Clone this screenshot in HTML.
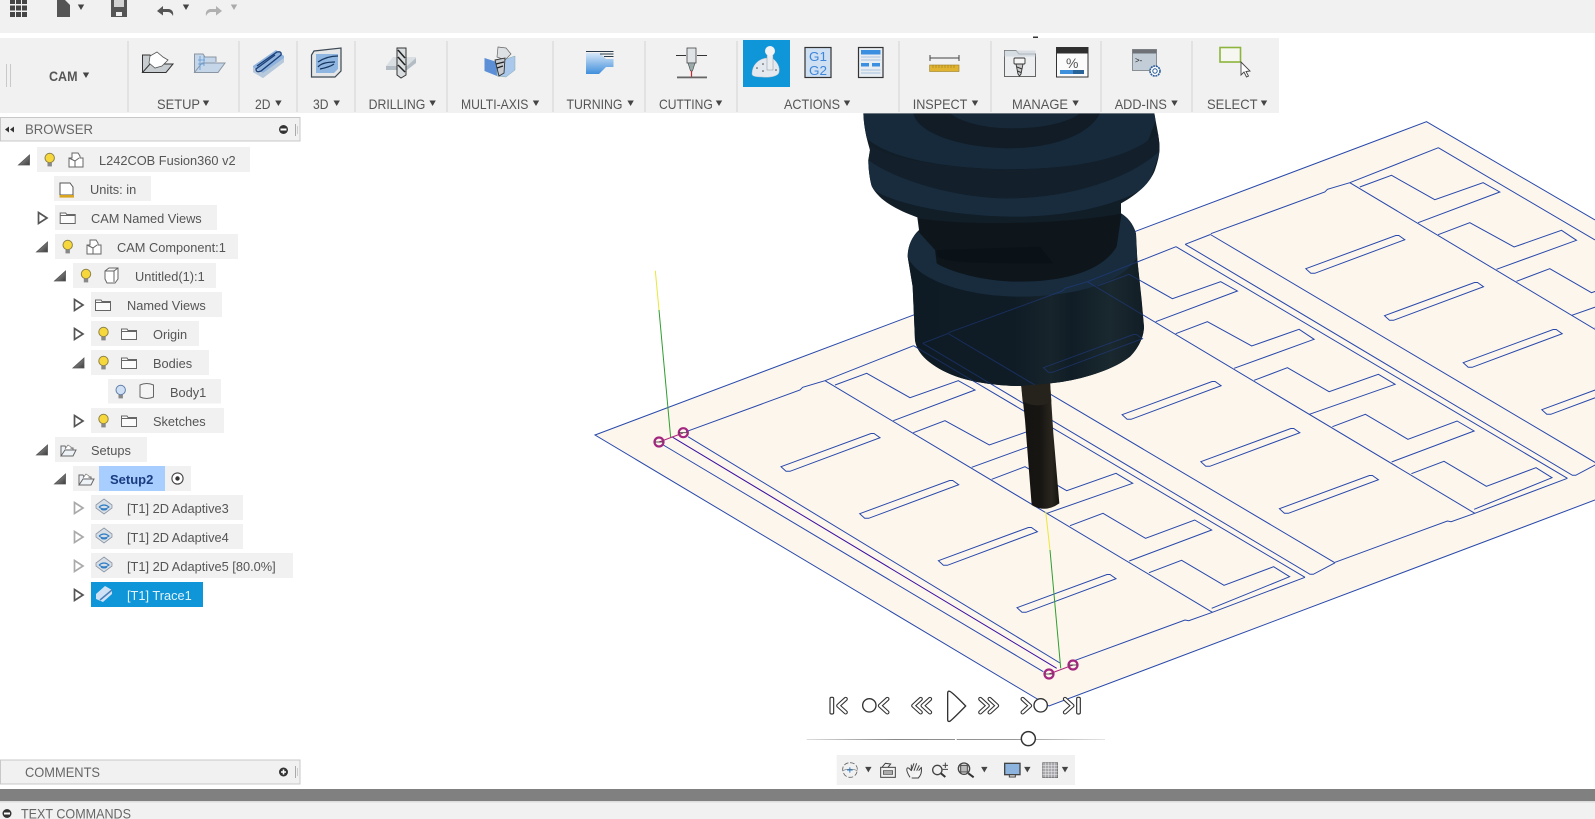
<!DOCTYPE html>
<html><head><meta charset="utf-8"><title>CAM</title>
<style>
html,body{margin:0;padding:0;background:#fff;width:1595px;height:819px;overflow:hidden}
svg{display:block;position:absolute;left:0;top:0}
text{font-family:"Liberation Sans",Arial,sans-serif}
.l{font-size:14px;fill:#555}
.t{font-size:12.8px;fill:#555}
.ln{fill:none;stroke:#2748ab;stroke-width:1}
</style></head><body>
<svg width="1595" height="819" viewBox="0 0 1595 819" xmlns="http://www.w3.org/2000/svg">
<defs>
<linearGradient id="body" x1="0" x2="1" y1="0" y2="0"><stop offset="0" stop-color="#0f1b24"/><stop offset=".45" stop-color="#0f1c26"/><stop offset=".6" stop-color="#17242b"/><stop offset=".68" stop-color="#101d26"/><stop offset=".84" stop-color="#1a282f"/><stop offset="1" stop-color="#101c24"/></linearGradient>
<linearGradient id="shaft" x1="0" x2="1" y1="0" y2="0"><stop offset="0" stop-color="#151411"/><stop offset=".5" stop-color="#171512"/><stop offset=".8" stop-color="#2a261e"/><stop offset="1" stop-color="#16140f"/></linearGradient>
<linearGradient id="tg" x1="0" x2="1" y1="0" y2="1"><stop offset="0" stop-color="#aaa"/><stop offset="1" stop-color="#3c3c3c"/></linearGradient>
<linearGradient id="sl" x1="0" x2="1"><stop offset="0" stop-color="#ddd"/><stop offset=".3" stop-color="#888"/><stop offset=".7" stop-color="#999"/><stop offset="1" stop-color="#e5e5e5"/></linearGradient>
<linearGradient id="bl" x1="0" x2="0" y1="0" y2="1"><stop offset="0" stop-color="#d6e6f7"/><stop offset="1" stop-color="#3f8fdc"/></linearGradient>
<polygon id="dn" points="-3.2,-2.5 3.2,-2.5 0,3"/>
<g id="bulb"><circle cx="0" cy="-2" r="4.7" fill="#f6d73c" stroke="#8d8248" stroke-width="1"/><rect x="-2.2" y="2.8" width="4.4" height="3.6" fill="#888"/></g>
<g id="bulbb"><circle cx="0" cy="-2" r="4.7" fill="#cfe0f5" stroke="#5f7ea8" stroke-width="1"/><rect x="-2.2" y="2.8" width="4.4" height="3.6" fill="#888"/></g>
<g id="fold"><path d="M-7.5,-5 H-2 L-1,-3.5 H7.5 V5.5 H-7.5 Z M-7.5,-2.5 H7.5" fill="#fbfbfb" stroke="#666" stroke-width="1"/></g>
<g id="comp"><path d="M-7,7 V-2 H-4 V-7 H2 L4,-4 V-2 H7 V7 Z M-1,7 V1 L3,-2 M-1,1 L-7,-2" fill="#fff" stroke="#666" stroke-width="1"/></g>
<polygon id="tf" points="-5.5,5 5.5,5 5.5,-5" fill="url(#tg)" stroke="#555" stroke-width=".8"/>
<polygon id="to" points="-4,-5.5 4.5,0 -4,5.5" fill="#fff" stroke="#555" stroke-width="1.7"/>
<polygon id="tl" points="-4,-5.5 4.5,0 -4,5.5" fill="#fff" stroke="#aaa" stroke-width="1.7"/>
<g id="ofold"><path d="M-7,6 V-4 H-3 L-2,-2 H5 V0 M-7,6 L-3,0 H8 L5,6 Z" fill="#eef3f8" stroke="#666" stroke-width="1"/><path d="M-3,-1 L0,-5 L3,-3 L3,-1" fill="#fff" stroke="#777" stroke-width=".7"/></g>
<g id="adp"><polygon points="0,-8 8,-2 8,1 0,7 -8,1 -8,-2" fill="#d8dee6" stroke="#8a95a3" stroke-width=".8"/><path d="M-5,0 Q0,-4 5,0 Q0,4 -5,0 M-3,2 Q0,4 3,2" fill="none" stroke="#2f7dc4" stroke-width="1.1"/></g>
<path id="slot" class="ln" d="M781,466.7 L871,433.5 L874,433.5 L880,437.7 L790,471.3 L786,471.3 Z"/>
<g id="core" class="ln">
<path d="M686,431.7 L800,390 L802.7,387.3 L825,380.7 L913.6,345.7"/>
<path d="M825,380.7 L1212.4,612.3"/>
<path d="M835,385 L866.7,373.3 L910,397.7 L958.3,380.7 L975,390 L893.3,420.7"/>
<path d="M913.3,432.7 L945,420.7 L989.3,445 L1036.7,428.3 L1051.7,438.3 L971.7,467.3"/>
<path d="M991.7,479.3 L1025,466.7 L1066.7,490.7 L1116,473.3 L1132.7,483.3 L1047,513.3"/>
<path d="M1070,525.7 L1103,513.3 L1145.5,538.3 L1194.7,520 L1211.7,530 L1129.2,561"/>
<path d="M1149,572.7 L1181.6,560.3 L1224,585.3 L1273.6,566.7 L1289.6,576.7 L1211.7,608.3"/>
<path d="M1072.6,661.3 L1185,620 L1188.7,620.7 L1212.4,612.3 L1305,577.3"/>
<use href="#slot"/><use href="#slot" transform="translate(78.7,47)"/><use href="#slot" transform="translate(157.4,94)"/><use href="#slot" transform="translate(236,141)"/>
</g>
<g id="mm" class="ln">
<path d="M913.6,345.7 L1305,577.3"/>
<path d="M922.8,343.3 L1310,574.3 L1313.3,574.3 L1335,562.8"/>
<path d="M948,333.5 L1335,562.8"/>
<path d="M922.8,343.3 L948,333.5"/>
</g>
<g id="lines">
<use href="#core"/><use href="#mm"/>
<use href="#core" transform="translate(262.4,-99)"/><use href="#mm" transform="translate(262.4,-99)"/>
<use href="#core" transform="translate(524.8,-198)"/>
<path class="ln" d="M1438.3,147.7 L1595,240"/>
<path class="ln" d="M688,436.7 L1060,663"/>
<path class="ln" d="M663.3,445 L1043.3,671.7"/>
<path fill="none" stroke="#3a0fa0" stroke-width="1" d="M671.7,436.7 L1056.7,668.3"/>
</g>
<path id="toolS" d="M70,40 C72,80 78,110 90,150 L85,180 C85,210 90,240 95,258 C115,300 170,330 232,352 L237,390 C215,410 203,440 203,470 L218,560 L225,720 C230,760 270,800 350,830 C400,848 480,858 540,858 L630,850 C720,842 820,810 870,770 C895,745 912,710 912,680 L905,600 L892,480 L888,400 C880,370 860,350 843,340 L843,310 C890,285 930,250 945,210 C955,180 960,160 958,130 C955,100 950,80 943,40 Z"/>
<clipPath id="tc"><use href="#toolS" transform="translate(840,100) scale(.33333)"/></clipPath>
<clipPath id="tb"><path d="M203,470 C230,540 380,590 540,590 C700,590 850,550 892,470 L912,680 L900,900 L200,900 Z"/></clipPath>
<clipPath id="ts"><use href="#toolS"/></clipPath>
</defs>

<!-- sheet -->
<polygon points="595,435 1426.5,121.7 1595,220 1595,500 1049,706" fill="#fdf6ed"/>
<path class="ln" d="M1595,220 L1426.5,121.7 L595,435 L1049,706 L1595,500"/>
<use href="#lines"/>

<!-- axes -->
<path d="M655.3,270.7 L659,310" stroke="#e8e83a" fill="none"/><path d="M659,310 L670.7,438" stroke="#2e9e2e" fill="none"/>
<path d="M1045.7,511.7 L1050,550" stroke="#e8e83a" fill="none"/><path d="M1050,550 L1060.7,668.3" stroke="#2e9e2e" fill="none"/>
<path d="M659,442 L683,433" stroke="#b0267f" fill="none"/><path d="M1049,674 L1073,665" stroke="#b0267f" fill="none"/>
<g fill="none" stroke="#a3267f" stroke-width="2.2"><circle cx="659" cy="442" r="4.5"/><circle cx="683.3" cy="432.7" r="4.5"/><circle cx="1049" cy="674" r="4.5"/><circle cx="1073" cy="665" r="4.5"/></g>
<g stroke="#333" stroke-width=".8"><path d="M655,442 H663"/><path d="M679,432.7 H687"/><path d="M1045,674 H1053"/><path d="M1069,665 H1077"/></g>

<!-- tool -->
<g transform="translate(840,100) scale(.33333)">
<path d="M543,850 L555,960 L575,1215 Q615,1240 658,1210 L640,1000 L630,845 Z" fill="url(#shaft)"/>
<path d="M543,850 L548,905 C580,920 610,920 634,905 L630,845 Z" fill="#26231d"/>
<use href="#toolS" fill="#111d27"/>
<g clip-path="url(#ts)">
<rect x="190" y="460" width="740" height="410" fill="url(#body)" clip-path="url(#tb)"/>
<path d="M235,355 L240,400 L285,450 L290,490 C320,510 420,545 540,545 C680,545 790,510 830,440 L845,340 C700,370 400,380 235,355 Z" fill="#0e161c"/>
<path d="M290,470 C330,490 420,490 540,490 L640,490 L600,440 L290,450 Z" fill="#0b1217"/>
<path d="M203,470 C230,540 380,590 540,590 C700,590 850,550 892,470 L888,400 L870,360 L845,340 L830,440 C790,510 680,545 540,545 C420,545 320,510 290,490 L285,450 L235,395 L203,430 Z" fill="#182c3e"/>
<path d="M80,190 L85,255 C130,310 350,350 520,350 C700,350 850,310 925,255 L965,140 C880,230 700,295 500,295 C320,292 150,230 80,175 Z" fill="#182c3e"/>
<path d="M60,40 L76,110 C130,170 300,205 500,208 C700,208 860,180 925,120 L955,40 Z" fill="#172a3b"/>
<path d="M220,40 C230,90 330,140 500,145 C650,145 750,100 780,40 Z" fill="#111c26"/>
<path d="M330,40 C370,70 440,85 520,85 C600,85 680,70 720,40 Z" fill="#172838"/>
<path d="M90,135 C130,170 300,205 500,208 C700,208 860,180 955,100 L962,150 C880,230 700,295 500,295 C320,292 150,230 85,180 Z" fill="#131f2a"/>
</g>
</g>
<g clip-path="url(#tc)" opacity=".42"><use href="#lines"/></g>

<!-- top bar -->
<rect x="0" y="0" width="1595" height="33" fill="#f1f1f1"/>
<rect x="0" y="38" width="1279" height="75" fill="#f1f1f1"/>
<rect x="1033" y="36.5" width="5" height="1.5" fill="#333"/>
<g fill="#454545"><rect x="10" y="0" width="5" height="4"/><rect x="16" y="0" width="5" height="4"/><rect x="22" y="0" width="5" height="4"/><rect x="10" y="5.5" width="5" height="5"/><rect x="16" y="5.5" width="5" height="5"/><rect x="22" y="5.5" width="5" height="5"/><rect x="10" y="12" width="5" height="5"/><rect x="16" y="12" width="5" height="5"/><rect x="22" y="12" width="5" height="5"/></g>
<path d="M57,0 H65 L70,5 V17 H57 Z" fill="#555"/>
<use href="#dn" x="81" y="7" fill="#444"/>
<path d="M111,0 H127 V17 H111 Z" fill="#555"/><rect x="114" y="0" width="10" height="7" fill="#f1f1f1" opacity=".8"/><rect x="116" y="12" width="6" height="4" fill="#f1f1f1"/>
<path d="M157,11 L163,6 V9 H169 Q174,10 173,16 Q171,12 168,12 H163 V15.5 Z" fill="#555"/>
<use href="#dn" x="186" y="7" fill="#444"/>
<path d="M222,11 L216,6 V9 H210 Q205,10 206,16 Q208,12 211,12 H216 V15.5 Z" fill="#b0b0b0"/>
<use href="#dn" x="234" y="7" fill="#aaa"/>

<!-- toolbar separators -->
<g fill="#e2e2e2"><rect x="127" y="41" width="2" height="71"/><rect x="238" y="41" width="2" height="71"/><rect x="296" y="41" width="2" height="71"/><rect x="354" y="41" width="2" height="71"/><rect x="446" y="41" width="2" height="71"/><rect x="552" y="41" width="2" height="71"/><rect x="644" y="41" width="2" height="71"/><rect x="736" y="41" width="2" height="71"/><rect x="898" y="41" width="2" height="71"/><rect x="990" y="41" width="2" height="71"/><rect x="1100" y="41" width="2" height="71"/><rect x="1191" y="41" width="2" height="71"/></g>
<g fill="#c9c9c9"><rect x="6" y="64" width="1" height="23"/><rect x="10" y="64" width="1" height="23"/></g>
<text x="49" y="81" font-size="14" font-weight="bold" fill="#555" textLength="28.5" lengthAdjust="spacingAndGlyphs">CAM</text>
<use href="#dn" x="86" y="75" fill="#444"/>

<!-- labels -->
<text class="l" x="157" y="109" textLength="43" lengthAdjust="spacingAndGlyphs">SETUP</text>
<text class="l" x="255" y="109" textLength="15.5" lengthAdjust="spacingAndGlyphs">2D</text>
<text class="l" x="313" y="109" textLength="15.5" lengthAdjust="spacingAndGlyphs">3D</text>
<text class="l" x="368.6" y="109" textLength="56.7" lengthAdjust="spacingAndGlyphs">DRILLING</text>
<text class="l" x="461" y="109" textLength="67.4" lengthAdjust="spacingAndGlyphs">MULTI-AXIS</text>
<text class="l" x="566.5" y="109" textLength="56" lengthAdjust="spacingAndGlyphs">TURNING</text>
<text class="l" x="659" y="109" textLength="53.8" lengthAdjust="spacingAndGlyphs">CUTTING</text>
<text class="l" x="784" y="109" textLength="56" lengthAdjust="spacingAndGlyphs">ACTIONS</text>
<text class="l" x="912.7" y="109" textLength="54.7" lengthAdjust="spacingAndGlyphs">INSPECT</text>
<text class="l" x="1012" y="109" textLength="56" lengthAdjust="spacingAndGlyphs">MANAGE</text>
<text class="l" x="1114.7" y="109" textLength="52.2" lengthAdjust="spacingAndGlyphs">ADD-INS</text>
<text class="l" x="1207" y="109" textLength="50.5" lengthAdjust="spacingAndGlyphs">SELECT</text>
<g fill="#444"><use href="#dn" x="206" y="103"/><use href="#dn" x="278.4" y="103"/><use href="#dn" x="336.7" y="103"/><use href="#dn" x="432.6" y="103"/><use href="#dn" x="536" y="103"/><use href="#dn" x="630.6" y="103"/><use href="#dn" x="719" y="103"/><use href="#dn" x="847" y="103"/><use href="#dn" x="975" y="103"/><use href="#dn" x="1075.6" y="103"/><use href="#dn" x="1174.5" y="103"/><use href="#dn" x="1264" y="103"/></g>

<!-- setup icons -->
<path d="M142.5,72.5 V55 H150 L152,58 H160 V62 M142.5,72.5 L150,64 H173 L166,72.5 Z" fill="#c8cdd2" stroke="#333" stroke-width="1"/>
<path d="M149,63 L150,56 L157,52 L163,57 L168,60 L162,66 L155,68 Z" fill="#fff" stroke="#555" stroke-width=".8"/>
<path d="M194.5,72.5 V54 H203 L205,57 H216 V62 M194.5,72.5 L202,63 H225 L218,72.5 Z" fill="#c4d6e8" stroke="#8a95a3" stroke-width="1"/>
<path d="M198,60 H205 M198,64 H204 M200,56 V70 M204,56 V66" stroke="#5e9bd8" stroke-width=".8" fill="none"/>
<!-- 2D -->
<path d="M253,66 L276,50 L284,56 L284,62 L263,78 L253,72 Z" fill="#8fb3dc"/>
<path d="M253,72 L263,78 L284,62 L284,58 L263,73 L253,67 Z" fill="#b8c9dc"/>
<path d="M257,66 L277,52 Q282,51 281,55 L261,71 Q256,73 256,69 L275,55" fill="none" stroke="#1b3f78" stroke-width="1.3"/>
<!-- 3D -->
<path d="M314,51 L341,48 V71 L335,77 H311.5 V55 Z" fill="#e4e6e8" stroke="#3d4954" stroke-width="1.2"/>
<path d="M316,54 H338 V69 L334,73 H316 Z" fill="#8fb6e0"/>
<path d="M318,62 Q327,56 338,56 M318,67 Q322,62 335,62 M320,69 Q330,67 334,64" stroke="#16365f" stroke-width="1.2" fill="none"/>
<!-- drilling -->
<path d="M386,66 L393,57 H416 V63 L407,70 H386 Z" fill="#d9dee2"/>
<path d="M386,66 H407 L416,58 V63 L407,70 H386 Z" fill="#b5bdc4"/>
<path d="M397,48 H406 V75 L401,78 L397,75 Z" fill="#d9dde0" stroke="#333" stroke-width="1"/>
<path d="M398,50 L405,58 M398,57 L405,65 M398,65 L405,72" stroke="#222" stroke-width="1.5"/>
<!-- multi-axis -->
<path d="M484.5,58 L497,62 V76 L484.5,71 Z" fill="#5c8fd6"/><path d="M497,62 L515,56 V70 L506,77 L497,76 Z" fill="#a9c8ec" stroke="#8aa" stroke-width=".5"/>
<path d="M498,47 L506,48 L511,54 L505,60 L497,57 Z" fill="#dde1e4" stroke="#666" stroke-width=".7"/>
<path d="M495,60 L505,58 L504,73 L499,76 Z" fill="#c8ccd0" stroke="#333" stroke-width=".9"/>
<path d="M496,64 L504,62 M497,68 L503,66" stroke="#222" stroke-width="1.2"/>
<!-- turning -->
<path d="M586,53 H600 L606,59 H613.5 V67 H606 L599,74 H586 Z" fill="url(#bl)"/>
<path d="M586,51.5 H613.5 M600,54 H613.5 M604,56.5 H613.5" stroke="#2b3a4a" stroke-width="1" fill="none"/>
<!-- cutting -->
<path d="M676,55.5 H686 M697,55.5 H707" stroke="#333" stroke-width="1"/>
<rect x="687" y="48" width="9" height="15" fill="#dfe3e6" stroke="#444" stroke-width=".8"/>
<path d="M688,63 H695 L692.5,71 H690.5 Z" fill="#9aa" stroke="#444" stroke-width=".6"/>
<path d="M691.5,71 V77" stroke="#c9252d" stroke-width="1.2"/>
<rect x="677" y="76.5" width="30" height="1.8" fill="#666"/>
<!-- actions -->
<rect x="743" y="40" width="47" height="47" fill="#0e96d9"/>
<path d="M752,74 C752,64 760,58 768,58 H772 C778,62 780,68 779,72 C779,76 770,78 762,77 C755,77 752,76 752,74 Z" fill="#e3e9ef" stroke="#aebccb" stroke-width=".5"/>
<rect x="767" y="55" width="6" height="15" fill="#e9edf0" stroke="#8895a0" stroke-width=".5"/>
<circle cx="770" cy="51" r="5" fill="#f0f2f4"/>
<g fill="#444"><circle cx="757" cy="68" r=".8"/><circle cx="763" cy="64" r=".8"/><circle cx="763" cy="71" r=".8"/><circle cx="776" cy="70" r=".8"/></g>
<rect x="805" y="47.5" width="26" height="30" fill="#cfe0f2" stroke="#333" stroke-width="1.2"/>
<text x="809" y="61" font-size="13" fill="#3f86d9" textLength="18" lengthAdjust="spacingAndGlyphs">G1</text>
<text x="809" y="75" font-size="13" fill="#3f86d9" textLength="18" lengthAdjust="spacingAndGlyphs">G2</text>
<rect x="858.5" y="47.5" width="24.5" height="30" fill="#e8edf2" stroke="#333" stroke-width="1.2"/>
<rect x="861" y="50" width="19.5" height="4.5" fill="#3b8fe0"/>
<path d="M861,57 H880.5 M861,60 H880.5 M861,70 H880.5 M861,73 H880.5" stroke="#a9c4de" stroke-width="1"/>
<rect x="861" y="63" width="8" height="3.5" fill="#3b8fe0"/><rect x="872" y="63" width="8" height="3.5" fill="#3b8fe0"/>
<!-- inspect -->
<path d="M930,58 H959 M930,55 V61 M959,55 V61" stroke="#444" stroke-width="1" fill="none"/>
<rect x="929.6" y="65" width="29.4" height="6.5" fill="#e0b431" stroke="#9c7d20" stroke-width=".6"/>
<path d="M933,65 V68 M936,65 V68 M939,65 V68 M942,65 V68 M945,65 V68 M948,65 V68 M951,65 V68 M954,65 V68" stroke="#9c7d20" stroke-width=".6"/>
<!-- manage -->
<path d="M1004.5,76.5 V50.5 H1016 L1019,54 H1035.5 V76.5 Z" fill="#eceef0" stroke="#666" stroke-width="1"/><rect x="1004.5" y="50.5" width="31" height="6" fill="#cdd5dd" opacity=".7"/>
<rect x="1014" y="58" width="11" height="6" rx="1" fill="#f5f5f5" stroke="#333" stroke-width=".9"/>
<path d="M1016,64 H1023 L1021,74 L1019.5,76 L1018,74 Z" fill="#ccc" stroke="#333" stroke-width=".9"/><path d="M1017,67 L1022,69 M1017.5,71 L1021,72.5" stroke="#333"/>
<rect x="1056.5" y="47.5" width="31.5" height="29.5" fill="#fbfbfb" stroke="#333" stroke-width="1"/>
<rect x="1056.5" y="47.5" width="31.5" height="6" fill="#2f2f2f"/>
<rect x="1060" y="70" width="13" height="4" fill="#3e8fdc"/><rect x="1073" y="70" width="11" height="4" fill="#2a6398"/>
<text x="1066" y="68" font-size="14" fill="#555">%</text>
<!-- addins -->
<rect x="1132.5" y="49.5" width="24" height="21" fill="#c3cdd8" stroke="#8a8f95" stroke-width="1"/><rect x="1132.5" y="49.5" width="24" height="4" fill="#6e7276"/>
<text x="1135" y="63" font-size="8" fill="#222">&gt;-</text>
<circle cx="1155" cy="71" r="5" fill="#fff" stroke="#2a5c9a" stroke-width="1.6" stroke-dasharray="2 .7"/><circle cx="1155" cy="71" r="2.2" fill="#fff" stroke="#2a5c9a"/>
<!-- select -->
<rect x="1220" y="47.5" width="20.5" height="14.5" fill="#f7f7f2" stroke="#8db43c" stroke-width="1.6"/>
<path d="M1241,62 V75 L1244,72 L1246.5,77 L1248.5,76 L1246,71.5 L1250,71 Z" fill="#fff" stroke="#444" stroke-width=".9"/>

<!-- browser -->
<rect x="0.5" y="117.5" width="299.5" height="23.5" fill="#f1f1f1" stroke="#c8c8c8"/>
<g fill="#333"><polygon points="5,129.5 9,126.5 9,132.5"/><polygon points="10,129.5 14,126.5 14,132.5"/></g>
<text x="25" y="134" font-size="14" fill="#666" textLength="68" lengthAdjust="spacingAndGlyphs">BROWSER</text>
<circle cx="283.5" cy="129.5" r="4.5" fill="#333"/><rect x="280.5" y="128.5" width="6" height="2" fill="#fff"/>
<rect x="295" y="124" width="1" height="12" fill="#aaa"/><rect x="297" y="126" width="1" height="8" fill="#ccc"/>

<g fill="#f1f1f1">
<rect x="37" y="147" width="213" height="25"/><rect x="54" y="176" width="97" height="25"/><rect x="55" y="205" width="162" height="25"/><rect x="55" y="234" width="183" height="25"/><rect x="73" y="263" width="143" height="25"/><rect x="91" y="292" width="131" height="25"/><rect x="91" y="321" width="108" height="25"/><rect x="91" y="350" width="118" height="25"/><rect x="108" y="379" width="113" height="24.5"/><rect x="91" y="408" width="133" height="25"/><rect x="55" y="437" width="92" height="25"/><rect x="73" y="466" width="118" height="25"/><rect x="91" y="495" width="152" height="25"/><rect x="91" y="524" width="152" height="25"/><rect x="91" y="553" width="202" height="25"/>
</g>
<rect x="99" y="466" width="66" height="25" fill="#a8ceff"/>
<rect x="91" y="582" width="112" height="25" fill="#0e96d9"/>

<use href="#tf" x="24" y="160"/><use href="#bulb" x="49.7" y="160"/><use href="#comp" x="76" y="160"/>
<text class="t" x="99" y="165">L242COB Fusion360 v2</text>
<path d="M60,184 V195 H73 V187 L70,183 H60 Z" fill="#fff" stroke="#555"/><rect x="59.5" y="195" width="14.5" height="2.6" fill="#d9a520"/>
<text class="t" x="90" y="194">Units: in</text>
<use href="#to" x="42.5" y="218"/><use href="#fold" x="67.7" y="218"/>
<text class="t" x="91" y="223">CAM Named Views</text>
<use href="#tf" x="42" y="247"/><use href="#bulb" x="67.7" y="247"/><use href="#comp" x="94" y="247"/>
<text class="t" x="117" y="252">CAM Component:1</text>
<use href="#tf" x="60" y="276"/><use href="#bulb" x="86" y="276"/>
<path d="M105,279 V271 L109,268 H118 V279 L115,283 H107 Z M105,271 H114 L118,268 M114,271 V282" fill="#fff" stroke="#666"/>
<text class="t" x="135" y="281">Untitled(1):1</text>
<use href="#to" x="78.5" y="305"/><use href="#fold" x="103" y="305"/>
<text class="t" x="127" y="310">Named Views</text>
<use href="#to" x="78.5" y="334"/><use href="#bulb" x="103.5" y="334"/><use href="#fold" x="129" y="334"/>
<text class="t" x="153" y="339">Origin</text>
<use href="#tf" x="78.5" y="363"/><use href="#bulb" x="103.5" y="363"/><use href="#fold" x="129" y="363"/>
<text class="t" x="153" y="368">Bodies</text>
<use href="#bulbb" x="120.7" y="392"/>
<path d="M140,385 Q146.7,382 153.5,385 V397 Q146.7,400 140,397 Z" fill="#f4f4f4" stroke="#666"/>
<text class="t" x="170" y="397">Body1</text>
<use href="#to" x="78.5" y="421"/><use href="#bulb" x="103.5" y="421"/><use href="#fold" x="129" y="421"/>
<text class="t" x="153" y="426">Sketches</text>
<use href="#tf" x="42" y="450"/><use href="#ofold" x="68" y="450"/>
<text class="t" x="91" y="455">Setups</text>
<use href="#tf" x="60" y="479"/><use href="#ofold" x="86" y="479"/>
<text x="110" y="484" font-size="13" font-weight="bold" fill="#1a3b80">Setup2</text>
<circle cx="177.5" cy="478.5" r="5.6" fill="#fff" stroke="#444" stroke-width="1.1"/><circle cx="177.5" cy="478.5" r="2.2" fill="#333"/>
<use href="#tl" x="78.5" y="508"/><use href="#adp" x="104" y="507"/>
<text class="t" x="127" y="513">[T1] 2D Adaptive3</text>
<use href="#tl" x="78.5" y="537"/><use href="#adp" x="104" y="536"/>
<text class="t" x="127" y="542">[T1] 2D Adaptive4</text>
<use href="#tl" x="78.5" y="566"/><use href="#adp" x="104" y="565"/>
<text class="t" x="127" y="571">[T1] 2D Adaptive5 [80.0%]</text>
<use href="#to" x="78.5" y="595"/>
<path d="M96,594 L105,586 L112,590 V594 L103,602 L96,599 Z" fill="#cfe2f5"/><path d="M100,600 L112,590" stroke="#4a7fb8" stroke-width="1.5"/>
<text x="127" y="600" font-size="12.8" fill="#e4f3fb">[T1] Trace1</text>

<!-- comments -->
<rect x="0.5" y="760" width="299.5" height="24" fill="#f1f1f1" stroke="#c8c8c8"/>
<text x="25" y="777" font-size="14" fill="#666" textLength="75" lengthAdjust="spacingAndGlyphs">COMMENTS</text>
<circle cx="283.5" cy="772" r="4.5" fill="#333"/><path d="M281,772 H286 M283.5,769.5 V774.5" stroke="#fff" stroke-width="1.6"/>
<rect x="295" y="766" width="1" height="12" fill="#aaa"/><rect x="297" y="768" width="1" height="8" fill="#ccc"/>

<!-- bottom -->
<rect x="0" y="789" width="1595" height="12" fill="#808080"/>
<rect x="0" y="801" width="1595" height="1.5" fill="#ddd"/>
<rect x="0" y="802.5" width="1595" height="17" fill="#f1f1f1"/>
<circle cx="7" cy="813.5" r="4.5" fill="#333"/><rect x="4" y="812.5" width="6" height="2" fill="#fff"/>
<text x="21" y="818.5" font-size="14" fill="#666" textLength="110" lengthAdjust="spacingAndGlyphs">TEXT COMMANDS</text>

<!-- playback -->
<g transform="translate(800,680) scale(.33333)">
<rect x="90" y="52" width="11" height="50" rx="4" fill="#fff" stroke="#333" stroke-width="3.5"/>
<path d="M137,57 L115,77 L137,97" fill="none" stroke="#333" stroke-width="13" stroke-linecap="round" stroke-linejoin="round"/><path d="M137,57 L115,77 L137,97" fill="none" stroke="#fff" stroke-width="6.5" stroke-linecap="round" stroke-linejoin="round"/>
<circle cx="208" cy="76" r="20" fill="#fff" stroke="#333" stroke-width="4"/>
<path d="M262,57 L240,77 L262,97" fill="none" stroke="#333" stroke-width="13" stroke-linecap="round" stroke-linejoin="round"/><path d="M262,57 L240,77 L262,97" fill="none" stroke="#fff" stroke-width="6.5" stroke-linecap="round" stroke-linejoin="round"/>
<path d="M362,57 L340,77 L362,97 M390,57 L368,77 L390,97" fill="none" stroke="#333" stroke-width="13" stroke-linecap="round" stroke-linejoin="round"/><path d="M362,57 L340,77 L362,97 M390,57 L368,77 L390,97" fill="none" stroke="#fff" stroke-width="6.5" stroke-linecap="round" stroke-linejoin="round"/>
<path d="M449,34 Q443,32 443,40 V118 Q443,126 449,124 Q453,123 497,78 Q455,35 449,34 Z" fill="#fff" stroke="#333" stroke-width="4"/>
<path d="M541,57 L563,77 L541,97 M569,57 L591,77 L569,97" fill="none" stroke="#333" stroke-width="13" stroke-linecap="round" stroke-linejoin="round"/><path d="M541,57 L563,77 L541,97 M569,57 L591,77 L569,97" fill="none" stroke="#fff" stroke-width="6.5" stroke-linecap="round" stroke-linejoin="round"/>
<path d="M668,57 L690,77 L668,97" fill="none" stroke="#333" stroke-width="13" stroke-linecap="round" stroke-linejoin="round"/><path d="M668,57 L690,77 L668,97" fill="none" stroke="#fff" stroke-width="6.5" stroke-linecap="round" stroke-linejoin="round"/>
<circle cx="722" cy="76" r="20" fill="#fff" stroke="#333" stroke-width="4"/>
<path d="M795,57 L817,77 L795,97" fill="none" stroke="#333" stroke-width="13" stroke-linecap="round" stroke-linejoin="round"/><path d="M795,57 L817,77 L795,97" fill="none" stroke="#fff" stroke-width="6.5" stroke-linecap="round" stroke-linejoin="round"/>
<rect x="830" y="52" width="11" height="50" rx="4" fill="#fff" stroke="#333" stroke-width="3.5"/>
<rect x="20" y="177" width="895" height="3" fill="url(#sl)"/>
<rect x="465" y="174" width="5" height="8" fill="#fff"/>
<circle cx="685" cy="176" r="21" fill="#fff" stroke="#333" stroke-width="4.5"/>
<!-- nav -->
<rect x="110" y="225" width="715" height="90" fill="#f1f1f1"/>
<path d="M150,248 C165,248 172,258 172,268 C172,280 165,292 150,292 C136,292 128,280 128,268 C128,258 136,248 150,248 Z" fill="none" stroke="#666" stroke-width="2.5" stroke-dasharray="14 6"/>
<path d="M128,272 C140,266 160,266 172,272" fill="none" stroke="#777" stroke-width="2"/>
<path d="M141,270 H158 M149.5,262 V278" stroke="#2f7dc4" stroke-width="3"/>
<use href="#dn" transform="translate(205,268) scale(3)" fill="#444"/>
<rect x="242" y="262" width="44" height="30" fill="#f1f1f1" stroke="#444" stroke-width="3"/><rect x="250" y="272" width="28" height="11" fill="#aaa" stroke="#444" stroke-width="2"/><path d="M246,262 L256,250 L272,252 L264,262" fill="none" stroke="#444" stroke-width="3"/>
<path d="M330,292 C322,280 318,268 322,264 C328,262 332,272 334,272 L334,254 M334,272 L342,250 M342,272 L350,250 M350,272 L358,256 M356,272 L364,262 C366,278 362,286 355,294 H335" fill="#f7f7f7" stroke="#444" stroke-width="3" stroke-linejoin="round"/>
<circle cx="412" cy="270" r="14" fill="#f1f1f1" stroke="#444" stroke-width="4"/><path d="M423,280 L436,291" stroke="#333" stroke-width="6"/>
<path d="M428,256 H444 M436,248 V264 M428,268 H444" stroke="#444" stroke-width="3"/>
<circle cx="492" cy="266" r="17" fill="#f1f1f1" stroke="#444" stroke-width="4"/><rect x="482" y="256" width="20" height="20" fill="#bbb" stroke="#444" stroke-width="3"/><path d="M505,280 L521,292" stroke="#333" stroke-width="6"/>
<use href="#dn" transform="translate(553,268) scale(3)" fill="#444"/>
<rect x="614" y="250" width="46" height="34" fill="#8db4de" stroke="#444" stroke-width="4"/><path d="M628,285 V291 H646 V285" fill="none" stroke="#444" stroke-width="3"/>
<use href="#dn" transform="translate(682,268) scale(3)" fill="#444"/>
<rect x="728" y="248" width="45" height="45" fill="#a9a9ad" stroke="#666" stroke-width="2"/>
<path d="M736,248 V293 M745,248 V293 M754,248 V293 M763,248 V293 M728,257 H773 M728,266 H773 M728,275 H773 M728,284 H773" stroke="#eee" stroke-width="1.5"/>
<use href="#dn" transform="translate(795,268) scale(3)" fill="#444"/>
</g>
</svg>
</body></html>
